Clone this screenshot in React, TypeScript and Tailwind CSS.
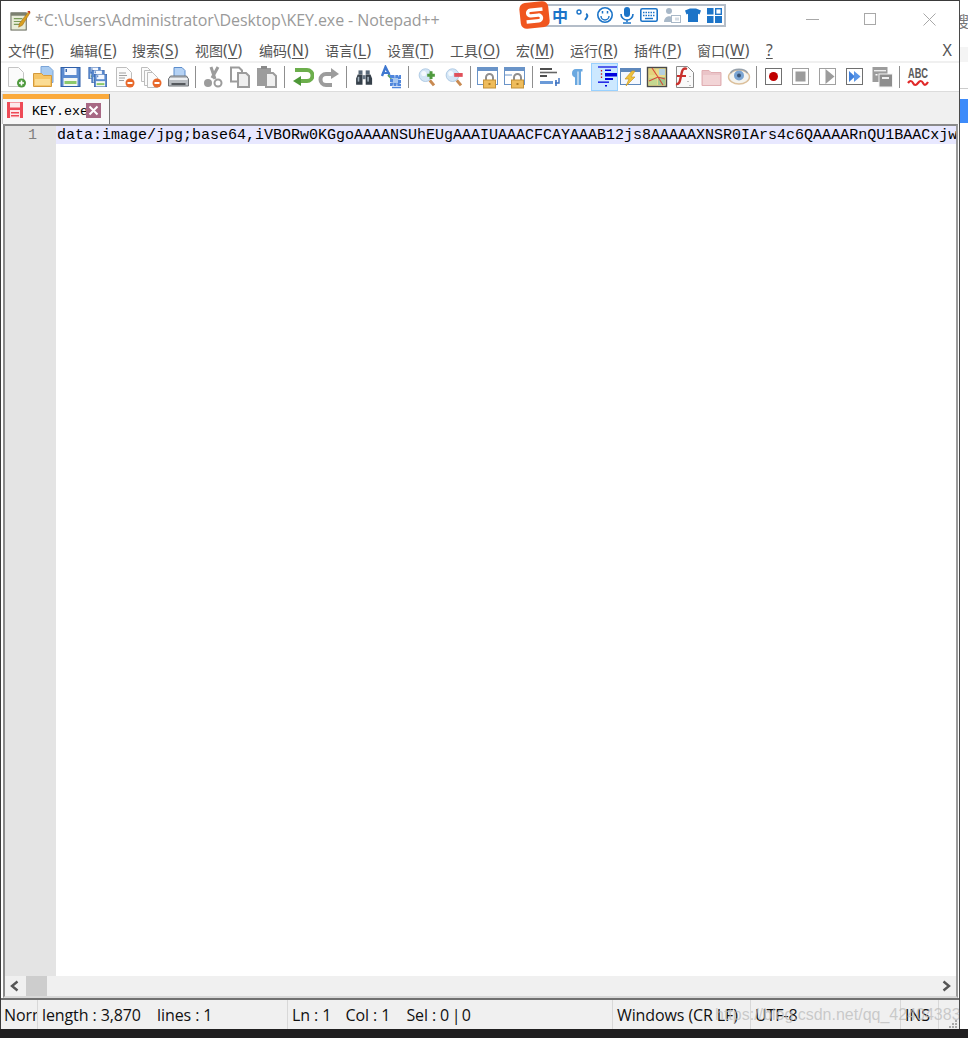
import React from "react";

type P = { children: React.ReactNode };
const Ico = ({ children }: P) => (
  <svg width="24" height="24" viewBox="0 0 24 24" className="block">{children}</svg>
);

const Page = ({ x = 4, y = 2, w = 15, h = 19, c = "#c4c4c4" }: { x?: number; y?: number; w?: number; h?: number; c?: string }) => (
  <path d={`M${x + 0.5} ${y + 0.5}h${w - 5}l5 5v${h - 5}h-${w}z`} fill="#fbfbfb" stroke={c} />
);
const Floppy = ({ x, y, s }: { x: number; y: number; s: number }) => (
  <g transform={`translate(${x} ${y}) scale(${s})`}>
    <rect x="0.5" y="0.5" width="19" height="19" fill="#5b8bd0" stroke="#2f5fa8" />
    <rect x="4" y="1" width="12" height="7" fill="#f4f8ff" />
    <rect x="5" y="2" width="1.5" height="3" fill="#3a6ab0" />
    <rect x="3" y="11" width="14" height="8" fill="#f4f8f4" />
    <rect x="4" y="14" width="12" height="3" fill="#8cc96c" />
  </g>
);
const Minus = ({ cx = 18, cy = 18 }: { cx?: number; cy?: number }) => (
  <>
    <circle cx={cx} cy={cy} r="4.5" fill="#e8682a" />
    <rect x={cx - 2.5} y={cy - 1} width="5" height="2" fill="#fff" />
  </>
);
const Lock = ({ x = 8, y = 9 }: { x?: number; y?: number }) => (
  <g transform={`translate(${x} ${y})`}>
    <path d="M3 6V3.5a3.5 3.5 0 0 1 7 0V6" fill="none" stroke="#8f8f8f" strokeWidth="2" />
    <rect x="0.5" y="6" width="12" height="8" fill="#eebc5c" stroke="#c49238" />
    <rect x="5.5" y="9" width="2" height="2" fill="#b07c20" />
  </g>
);
const Glass = ({ children }: P) => (
  <g transform="translate(3 2.5) scale(0.85)">
    <path d="M15 15l5 6" stroke="#c88a52" strokeWidth="3.5" />
    <circle cx="10" cy="9" r="7.5" fill="#d4e6f6" stroke="#a8c4e0" />
    <circle cx="8" cy="7" r="3" fill="#f4f9fe" />
    {children}
  </g>
);

const icons: Record<string, React.ReactNode> = {
  new: (<Ico><Page /><circle cx="17.5" cy="18" r="4.5" fill="#4f9a3e" /><path d="M15 18h5M17.5 15.5v5" stroke="#fff" strokeWidth="1.6" /></Ico>),
  open: (<Ico><path d="M10 1.5h8l4 4v12H10z" fill="#a9cbf0" stroke="#7aa4d8" /><path d="M2.5 8.5h8l2 2h8v11h-18z" fill="#f6c566" stroke="#d49a3c" /><rect x="4" y="14" width="15" height="6" fill="#fbdc94" /></Ico>),
  save: (<Ico><Floppy x={2.5} y={2} s={1} /></Ico>),
  saveall: (<Ico><Floppy x={3.5} y={2} s={0.6} /><Floppy x={6.5} y={5} s={0.65} /><Floppy x={9} y={9} s={0.65} /></Ico>),
  close: (<Ico><Page x={4} c="#bdbdbd" /><path d="M7 8h7M7 10.5h8M7 13h6M7 15.5h5" stroke="#a0a0a0" /><Minus cx={18} cy={18} /></Ico>),
  closeall: (<Ico><Page x={2} y={2} w={11} h={14} c="#bdbdbd" /><Page x={5} y={5} w={11} h={15} c="#bdbdbd" /><Page x={8} y={7} w={10} h={15} c="#bdbdbd" /><Minus cx={18} cy={18} /></Ico>),
  print: (<Ico><path d="M8 2.5h8l3 3v7H8z" fill="#b5d2f4" stroke="#5c8dcc" /><path d="M4.5 11h16l2 3v7h-20v-7z" fill="#b9bdc2" stroke="#6e7276" /><rect x="3.5" y="13" width="18" height="2" fill="#eef0f2" /><rect x="5.5" y="18" width="14" height="2" fill="#54585c" /></Ico>),
  cut: (<Ico><path d="M17 2l-6 11M10 2l4 12" stroke="#9c9c9c" strokeWidth="3" fill="none" /><circle cx="7" cy="18" r="4" fill="#9c9c9c" /><circle cx="17" cy="18" r="3.5" fill="none" stroke="#9c9c9c" strokeWidth="2" /></Ico>),
  copy: (<Ico><path d="M3 2.5h8l3 3v11H3z" fill="#fff" stroke="#9c9c9c" strokeWidth="2" /><path d="M10 8h8l3 3v11H10z" fill="#efefef" stroke="#9c9c9c" strokeWidth="2" /></Ico>),
  paste: (<Ico><rect x="2" y="3" width="14" height="18" fill="#9c9c9c" /><rect x="6" y="1" width="6" height="3" fill="#8a8a8a" /><path d="M11 8h7l3 3v11H11z" fill="#f0f0f0" stroke="#9c9c9c" strokeWidth="2" /></Ico>),
  undo: (<Ico><path d="M5 5h12a5.5 5.5 0 0 1 0 11H9" fill="none" stroke="#6cae4c" strokeWidth="4" /><path d="M11 11l-8 5 8 5z" fill="#4e9838" /></Ico>),
  redo: (<Ico><path d="M19 9H9a5.5 5.5 0 0 0 0 11h6" fill="none" stroke="#9c9c9c" strokeWidth="4" /><path d="M14 3l8 6-8 5z" fill="#9c9c9c" /></Ico>),
  find: (<Ico><g transform="translate(2.5 3) scale(0.8)"><rect x="5" y="3" width="5" height="5" fill="#586878" /><rect x="14" y="3" width="5" height="5" fill="#586878" /><path d="M4 8h6v13H2v-8zM20 8h-6v13h8v-8z" fill="#36404a" /><rect x="10" y="9" width="4" height="5" fill="#6a7886" /><rect x="4" y="11" width="2" height="6" fill="#a0aeba" /><rect x="16" y="11" width="2" height="6" fill="#a0aeba" /></g></Ico>),
  replace: (<Ico><path d="M3 11l3.5-9 4 8" fill="none" stroke="#3f78d0" strokeWidth="2.4" /><rect x="3.5" y="7" width="7" height="2" fill="#3f78d0" /><path d="M9 10l5 5" stroke="#5aa060" strokeWidth="2" /><rect x="12.5" y="11.5" width="8" height="8" fill="#a8c8f0" stroke="#4f86dc" strokeWidth="3" strokeDasharray="3 0.8" /><path d="M13 22.5h9" stroke="#4f86dc" strokeWidth="1.5" /></Ico>),
  zoomin: (<Ico><Glass><path d="M12 9h9M16.5 4.5v9" stroke="#4f9a3e" strokeWidth="3.5" /></Glass></Ico>),
  zoomout: (<Ico><Glass><rect x="12" y="6.5" width="10" height="4.5" fill="#e0505a" /></Glass></Ico>),
  syncv: (<Ico><rect x="1.5" y="2.5" width="20" height="17" fill="#fff" stroke="#6a94c8" /><rect x="1" y="2" width="21" height="4" fill="#6a94c8" /><Lock x={7} y={9} /></Ico>),
  synch: (<Ico><rect x="1.5" y="2.5" width="20" height="17" fill="#fff" stroke="#6a94c8" /><rect x="1" y="2" width="21" height="4" fill="#6a94c8" /><path d="M1 10h8" stroke="#6a94c8" /><Lock x={8} y={9} /></Ico>),
  wrap: (<Ico><path d="M2 4h12" stroke="#222" strokeWidth="1.6" /><path d="M2 7.5h17" stroke="#666" strokeWidth="1.6" /><path d="M2 11h7" stroke="#222" strokeWidth="1.6" /><path d="M2 17.5h13" stroke="#6a9ad8" strokeWidth="3" /><path d="M21 13v5h-4" stroke="#3a70c0" fill="none" strokeWidth="1.4" /><path d="M18 15v6" stroke="#3a70c0" strokeWidth="1.6" /></Ico>),
  para: (<Ico><path d="M17.5 4v2.5h-1.5V20h-2.5V6.5H12.5V20H10V12.5a4.3 4.3 0 0 1-3-4.2A4.3 4.3 0 0 1 11 4z" fill="#6aa8e0" /></Ico>),
  indent: (<Ico><path d="M5 2h19" stroke="#0000e0" strokeWidth="1.2" /><path d="M8.5 5v9" stroke="#d02020" strokeDasharray="1.5 1.8" strokeWidth="1.3" /><rect x="12" y="4.5" width="6" height="1.5" fill="#0000e0" /><rect x="12" y="8" width="12" height="3.5" fill="#0000e0" /><rect x="12" y="13" width="8" height="2" fill="#0000e0" /><rect x="5" y="16.5" width="7" height="1.3" fill="#0000e0" /><rect x="12" y="16.5" width="4" height="1.3" fill="#0000e0" /><rect x="12" y="20" width="2" height="1.5" fill="#0000e0" /></Ico>),
  udl: (<Ico><rect x="1.5" y="3.5" width="20" height="16" fill="#f4f8ff" stroke="#5e88bc" /><rect x="1" y="3" width="21" height="4" fill="#5e88bc" /><path d="M13 6l-7 8h4l-3 7 9-9h-4l4-6z" fill="#f0c23c" stroke="#c89a28" strokeWidth="0.7" /></Ico>),
  map: (<Ico><rect x="1.5" y="2.5" width="19" height="19" fill="#e8dc8c" stroke="#4a4a4a" strokeWidth="1.4" /><rect x="3" y="4" width="7" height="6" fill="#e4d27c" /><rect x="13" y="4" width="6" height="6" fill="#b4d0e0" /><rect x="12" y="12" width="7" height="8" fill="#a0c890" /><rect x="3" y="13" width="8" height="7" fill="#c4d890" /><path d="M6 3l6 9 5 8M3 16l9-4 7 2" fill="none" stroke="#d84838" strokeWidth="1.1" /></Ico>),
  func: (<Ico><path d="M3.5 1.5h11l6 6v15h-17z" fill="#fafafa" stroke="#8a8a8a" /><path d="M14 4c-5-2-5 3-6 7s-1 9-5 8" fill="none" stroke="#c8302c" strokeWidth="2.4" /><path d="M4 11h9" stroke="#c8302c" strokeWidth="2" /><path d="M17 11v1M15 16v1M17 20v1" stroke="#888" /></Ico>),
  folder: (<Ico><path d="M2 5.5h7l2 2h10v13H2z" fill="#eac4c8" stroke="#e0aeb2" /><rect x="3" y="10" width="17" height="10" fill="#f2d4d6" /></Ico>),
  eye: (<Ico><ellipse cx="12" cy="12" rx="10.5" ry="7" fill="#f4f4f0" stroke="#dcc09c" strokeWidth="1.4" /><circle cx="12" cy="10.5" r="5" fill="#7aa4d2" /><circle cx="12" cy="10.5" r="2" fill="#3a5474" /><path d="M3.5 8c3-5 14-5 17 0" fill="none" stroke="#98a2ac" strokeWidth="1.5" /></Ico>),
  rec: (<Ico><rect x="3.5" y="3.5" width="16" height="16" fill="#fff" stroke="#707070" /><circle cx="11.5" cy="11.5" r="4.5" fill="#c00000" /></Ico>),
  stop: (<Ico><rect x="3.5" y="3.5" width="16" height="16" fill="#fff" stroke="#a0a0a0" /><rect x="6.5" y="6.5" width="10" height="10" fill="#9c9c9c" /></Ico>),
  play: (<Ico><rect x="3.5" y="3.5" width="16" height="16" fill="#fff" stroke="#a0a0a0" /><path d="M9.5 4l9 7.5-9 7.5z" fill="#9c9c9c" /></Ico>),
  multi: (<Ico><rect x="3.5" y="3.5" width="16" height="16" fill="#fff" stroke="#707070" /><path d="M6 6l6 5.5-6 5.5z" fill="#3f80dc" /><path d="M11 6l6.5 5.5-6.5 5.5z" fill="#5a96e8" /></Ico>),
  macro: (<Ico><rect x="2.5" y="2" width="15" height="15" fill="#9c9c9c" /><rect x="4" y="5" width="12" height="1.4" fill="#eee" /><rect x="5.5" y="9" width="2" height="1.5" fill="#fff" /><rect x="9" y="9" width="5" height="1.5" fill="#fff" /><rect x="9" y="9" width="13.5" height="13" fill="#8e8e8e" stroke="#f4f4f4" /><rect x="12" y="12" width="7" height="2" fill="#f0f0f0" /></Ico>),
  abc: (<Ico><text x="3" y="13" fontFamily="Liberation Sans, sans-serif" fontWeight="700" fontSize="14" fill="#5a5a5a" textLength="20" lengthAdjust="spacingAndGlyphs">ABC</text><path d="M3 18q3-4 5 0t5 0 5 0 5-1" fill="none" stroke="#e02828" strokeWidth="2.2" /></Ico>),
};

const toolbar: (string | null)[] = [
  "new", "open", "save", "saveall", "close", "closeall", "print", null,
  "cut", "copy", "paste", null, "undo", "redo", null, "find", "replace", null,
  "zoomin", "zoomout", null, "syncv", "synch", null, "wrap", "para", "indent", "udl", "map", "func", "folder", "eye", null,
  "rec", "stop", "play", "multi", "macro", null, "abc",
];

const menus = [
  ["文件", "F", "w-[62px]"], ["编辑", "E", "w-[62px]"], ["搜索", "S", "w-[63px]"], ["视图", "V", "w-[64px]"],
  ["编码", "N", "w-[66px]"], ["语言", "L", "w-[62px]"], ["设置", "T", "w-[63px]"], ["工具", "O", "w-[66px]"],
  ["宏", "M", "w-[54px]"], ["运行", "R", "w-[64px]"], ["插件", "P", "w-[63px]"], ["窗口", "W", "w-[69px]"],
];

const Sep = () => (
  <div className="w-[8px] h-full flex justify-center items-center">
    <div className="w-px h-[22px] bg-[#8f8f8f]" />
  </div>
);

const Sogou = () => (
  <div className="absolute left-[519px] top-0 flex items-center h-[28px]">
    <div className="relative z-10 w-[29px] h-[26px] rounded-[6px] -rotate-6 bg-[#f0561f] flex items-center justify-center">
      <svg width="23" height="19" viewBox="0 0 24 20">
        <path d="M21 4H8a3 3 0 0 0 0 6h8a3 3 0 0 1 0 6H3" fill="none" stroke="#fff" strokeWidth="3.6" />
      </svg>
    </div>
    <div className="-ml-[4px] w-[181px] h-[23px] border-2 border-[#b4bdc8] bg-white flex items-center pl-[1px] text-[#1c74c8]">
      <span className="w-[24px] text-center text-[16px] leading-none font-bold font-['Noto_Sans_CJK_SC',sans-serif]">中</span>
      <svg width="20" height="16" viewBox="0 0 20 16" className="ml-[1px]"><circle cx="6" cy="5" r="2" fill="none" stroke="#1c74c8" strokeWidth="1.4" /><path d="M13 7a2 2 0 0 1 1 3l-2 3" fill="none" stroke="#1c74c8" strokeWidth="2" /></svg>
      <svg width="18" height="18" viewBox="0 0 18 18" className="ml-[3px]"><circle cx="9" cy="9" r="7.2" fill="none" stroke="#1c74c8" strokeWidth="1.6" /><path d="M5 10a4 4 0 0 0 8 0" fill="none" stroke="#1c74c8" strokeWidth="1.4" /><path d="M6.5 5v2.5M11.5 5v2.5" stroke="#1c74c8" strokeWidth="1.5" /></svg>
      <svg width="16" height="18" viewBox="0 0 16 18" className="ml-[5px]"><rect x="5" y="1" width="6" height="10" rx="3" fill="#1c74c8" /><path d="M2 8a6 6 0 0 0 12 0M8 14v2M4 17h8" fill="none" stroke="#1c74c8" strokeWidth="1.6" /></svg>
      <svg width="18" height="14" viewBox="0 0 18 14" className="ml-[5px]"><rect x="0.8" y="0.8" width="16.4" height="12.4" rx="1.5" fill="none" stroke="#1c74c8" strokeWidth="1.6" /><path d="M3 4.5h12M3 7.5h12" stroke="#1c74c8" strokeWidth="1.6" strokeDasharray="1.5 1" /><path d="M5 10.5h8" stroke="#1c74c8" strokeWidth="1.4" /></svg>
      <svg width="18" height="16" viewBox="0 0 18 16" className="ml-[5px]"><circle cx="6" cy="4" r="3" fill="#a8b8c8" /><path d="M1 15c0-7 9-7 10-3v3z" fill="#a8b8c8" /><rect x="8.5" y="8.5" width="9" height="7" fill="#fff" stroke="#a8b8c8" /><path d="M13 10.5v3M15 10.5v3" stroke="#a8b8c8" /></svg>
      <svg width="16" height="14" viewBox="0 0 16 14" className="ml-[4px]"><path d="M5 0.5h6l5 2-1.5 4-1.5-.7V14H3V5.8l-1.5.7L0 2.5z" fill="#1c74c8" /></svg>
      <svg width="15" height="15" viewBox="0 0 15 15" className="ml-[6px]"><rect x="0" y="0" width="6.5" height="6.5" fill="#1c74c8" /><rect x="8.7" y="0.7" width="5.6" height="5.6" fill="none" stroke="#1c74c8" strokeWidth="1.4" /><rect x="0" y="8" width="6.5" height="7" fill="#1c74c8" /><rect x="8" y="8" width="7" height="7" fill="#1c74c8" /></svg>
    </div>
  </div>
);

export default function App() {
  return (
    <div className="w-[968px] h-[1038px] flex flex-col bg-white overflow-hidden font-['Noto_Sans','Noto_Sans_CJK_SC',sans-serif]">
      <div className="flex h-[1029px]">
        <div className="relative w-[960px] h-full flex flex-col bg-white border-t border-l border-r border-[#3a3a3a] border-r-[#4a4a4a]">
          {/* title */}
          <div className="h-[39px] flex items-center pl-[9px] shrink-0">
            <svg width="21" height="21" viewBox="0 0 22 22">
              <rect x="1" y="3" width="16" height="18" fill="#e8ecd8" stroke="#5c6052" />
              <path d="M1 3h16v3H1z" fill="#7c8070" />
              <path d="M4 9h9M4 12h8M4 15h7" stroke="#7a9a5a" strokeWidth="1.2" />
              <path d="M20 1L10 14l-1 4 4-2L21 3z" fill="#d8a020" stroke="#a06a18" strokeWidth="0.6" />
              <path d="M18 1h3v3z" fill="#c83c2c" />
            </svg>
            <span className="ml-[4px] mb-[2px] text-[16px] text-[#9a9a9a] whitespace-nowrap font-['Open_Sans',sans-serif] tracking-[-0.08px]">*C:\Users\Administrator\Desktop\KEY.exe - Notepad++</span>
            <div className="ml-auto mb-[3px] flex items-center">
              <div className="w-[13px] h-px bg-[#a8a8a8]" />
              <div className="w-[12px] h-[12px] border border-[#a8a8a8] ml-[45px]" />
              <svg width="13" height="13" viewBox="0 0 13 13" className="ml-[47px] mr-[23px]"><path d="M0.5 0.5l12 12M12.5 0.5l-12 12" stroke="#a8a8a8" /></svg>
            </div>
          </div>
          <Sogou />
          {/* menu */}
          <div className="h-[21px] flex items-center pl-[7px] text-[14px] leading-[21px] text-[#555] shrink-0 whitespace-nowrap">
            {menus.map(([n, k, w]) => (
              <span key={k} className={w}>
                {n}
                <span className="text-[15.5px] tracking-[0.3px]">(<span className="underline underline-offset-2">{k}</span>)</span>
              </span>
            ))}
            <span className="underline underline-offset-2 text-[15.5px]">?</span>
            <span className="ml-auto mr-[7px] text-[16px] text-[#555]">X</span>
          </div>
          {/* toolbar */}
          <div className="h-[31px] flex items-center pl-[1px] bg-white border-t-2 border-b border-t-[#f0f0f0] border-b-[#dcdcdc] shrink-0">
            {toolbar.map((t, i) =>
              t === null ? (
                <Sep key={i} />
              ) : (
                <div key={i} className={`w-[27px] h-full flex items-center justify-center ${t === "indent" ? "bg-[#cce8ff] border border-[#99d1ff] translate-x-px" : ""}`}>
                  {icons[t]}
                </div>
              ),
            )}
          </div>
          {/* tab bar */}
          <div className="h-[32px] bg-[#f0f0f0] flex pl-[1px] pt-[2px] shrink-0">
            <div className="w-[108px] h-[30px] border-l border-r border-l-[#c8c8c8] border-r-[#777] bg-[#f8f8f8] flex flex-col">
              <div className="h-[5px] bg-[#fbaa3c] shrink-0" />
              <div className="flex-1 flex items-center pl-[4px] pb-[3px]">
                <svg width="16" height="16" viewBox="0 0 16 16"><rect width="16" height="16" fill="#ee4a56" /><rect x="3" y="0.5" width="10" height="5" fill="#fde8ea" /><rect x="3" y="8" width="10" height="8" fill="#fde8ea" /><rect x="4" y="10" width="8" height="1.5" fill="#ee4a56" /><rect x="4" y="13" width="8" height="1.5" fill="#ee4a56" /></svg>
                <span className="ml-[9px] mt-[3px] w-[54px] text-[13.33px] font-['Liberation_Mono',monospace] text-black leading-none whitespace-nowrap">KEY.exe</span>
                <svg width="15" height="15" viewBox="0 0 15 15"><rect width="15" height="15" fill="#a86884" /><path d="M3.5 3.5l8 8M11.5 3.5l-8 8" stroke="#fff" strokeWidth="2" /></svg>
              </div>
            </div>
          </div>
          {/* editor */}
          <div className="flex-1 min-h-0 flex flex-col ml-[2px] mr-[1px] border-2 border-[#8a8a8a] border-r-[#9a9a9a] border-b-[#d8d8d8]">
            <div className="flex-1 min-h-0 flex bg-white overflow-hidden">
              <div className="w-[51px] bg-[#e4e4e4] shrink-0 text-[#808080] font-['Liberation_Mono',monospace] text-[15px] leading-[20px] pl-[23px]">1</div>
              <div className="flex-1 min-w-0 overflow-hidden">
                <div className="h-[18px] bg-[#e8e8ff] whitespace-nowrap overflow-hidden font-['Liberation_Mono',monospace] text-[15px] leading-[20px] text-black pl-px">
                  data:image/jpg;base64,iVBORw0KGgoAAAANSUhEUgAAAIUAAACFCAYAAAB12js8AAAAAXNSR0IArs4c6QAAAARnQU1BAACxjwv8YQUAAA
                </div>
              </div>
            </div>
            <div className="h-[20px] bg-[#f0f0f0] flex items-center shrink-0">
              <svg width="21" height="20" viewBox="0 0 21 20"><path d="M12.5 5.5L7 10l5.500 4.500" fill="none" stroke="#555" strokeWidth="2.4" /></svg>
              <div className="w-[21px] h-full bg-[#cdcdcd]" />
              <svg width="21" height="20" viewBox="0 0 21 20" className="ml-auto"><path d="M8.5 5.5L14 10l-5.500 4.500" fill="none" stroke="#555" strokeWidth="2.4" /></svg>
            </div>
          </div>
          <div className="h-[2px] bg-[#707070] shrink-0" />
          {/* status */}
          <div className="relative h-[29px] bg-[#f0f0f0] flex text-[16px] leading-[30px] text-[#111] whitespace-nowrap shrink-0 overflow-hidden font-['Open_Sans',sans-serif] tracking-[-0.1px]">
            <div className="w-[37px] pl-[3px] overflow-hidden border-r border-[#d8d8d8]">Normal text file</div>
            <div className="w-[250px] pl-[4px] border-r border-[#d8d8d8] whitespace-pre">length : 3,870    lines : <span className="tracking-[-1px]">1</span></div>
            <div className="w-[325px] pl-[4px] border-r border-[#d8d8d8] whitespace-pre">Ln : 1<span className="tracking-[-0.6px]">    </span>Col : 1    Sel : 0<span className="tracking-[-1.5px]"> | </span>0</div>
            <div className="w-[138px] pl-[4px] border-r border-[#d8d8d8]">Windows (CR LF)</div>
            <div className="w-[150px] pl-[4px] border-r border-[#d8d8d8]">UTF-8</div>
            <div className="w-[38px] pl-[4px] border-r border-[#d8d8d8]">INS</div>
            <svg width="12" height="12" viewBox="0 0 12 12" className="absolute right-[1px] bottom-0"><path d="M9 3h2v2H9zM6 6h2v2H6zM9 6h2v2H9zM3 9h2v2H3zM6 9h2v2H6zM9 9h2v2H9z" fill="#aaa" /></svg>
            <span className="absolute left-[714px] top-0 text-[16px] tracking-normal text-[#bcbcbc]/75 font-['Liberation_Sans',sans-serif]">https://blog.csdn.net/qq_42404383</span>
          </div>
        </div>
        <div className="flex-1 flex flex-col bg-white overflow-hidden">
          <div className="h-[47px] text-[15px] leading-[42px] text-[#777] -ml-[6px] whitespace-nowrap font-['Noto_Sans_CJK_SC',sans-serif]">搜</div>
          <div className="h-[15px] bg-[#f4f4f4]" />
          <div className="h-[26px]" />
          <div className="h-px bg-[#cccccc]" />
          <div className="h-[10px]" />
          <div className="h-[24px] bg-[#3d8bfa]" />
        </div>
      </div>
      <div className="h-[9px] bg-[#201f20] shrink-0" />
    </div>
  );
}
